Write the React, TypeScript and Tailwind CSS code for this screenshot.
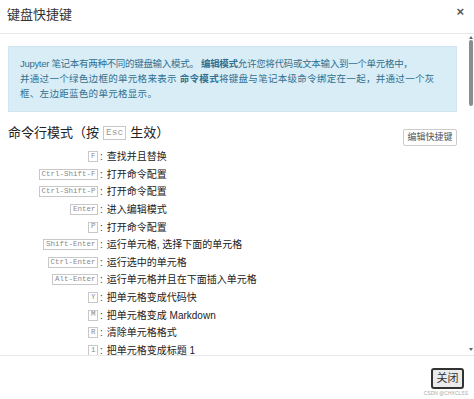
import React from "react";

const rows: [string, string][] = [
  ["F", "查找并且替换"],
  ["Ctrl-Shift-F", "打开命令配置"],
  ["Ctrl-Shift-P", "打开命令配置"],
  ["Enter", "进入编辑模式"],
  ["P", "打开命令配置"],
  ["Shift-Enter", "运行单元格, 选择下面的单元格"],
  ["Ctrl-Enter", "运行选中的单元格"],
  ["Alt-Enter", "运行单元格并且在下面插入单元格"],
  ["Y", "把单元格变成代码快"],
  ["M", "把单元格变成 Markdown"],
  ["R", "清除单元格格式"],
  ["1", "把单元格变成标题 1"],
];

const sans = "font-['Liberation_Sans','Noto_Sans_CJK_SC',sans-serif]";

function Kbd({ children }: { children: React.ReactNode }) {
  return (
    <span className="inline-flex items-center h-[11px] px-[1.5px] border border-[#c8c8c8] bg-white text-[#8a8a8a] font-['Liberation_Mono',monospace] text-[7.5px] leading-none">
      {children}
    </span>
  );
}

export default function App() {
  return (
    <div className={`w-[474px] h-[399px] bg-white relative flex flex-col overflow-hidden text-[#333] ${sans}`}>
      {/* header */}
      <div className="h-[34px] shrink-0 border-b border-[#e8e8e8] flex items-center justify-between pl-[7px] pr-[10px]">
        <div className="text-[13px] leading-none text-[#333] -mt-[5px]">键盘快捷键</div>
        <div className="text-[13px] font-bold text-[#555] leading-none -mt-[11px]">×</div>
      </div>

      {/* body */}
      <div className="flex-1 relative overflow-hidden">
        <div className="pl-[8px] pr-[17px] pt-[12px]">
          <div className="bg-[#d9edf7] border border-[#cfe6f2] text-[#31708f] text-[9.5px] leading-[15px] whitespace-nowrap px-[11px] pt-[9px] pb-[10px]">
            <span className="tracking-[-0.3px]">
              Jupyter 笔记本有两种不同的键盘输入模式。 <b>编辑模式</b>允许您将代码或文本输入到一个单元格中，
            </span>
            <br />
            <span className="tracking-[0.3px]">
              并通过一个绿色边框的单元格来表示 <b>命令模式</b>将键盘与笔记本级命令绑定在一起，并通过一个灰
            </span>
            <br />
            <span className="tracking-[0.3px]">框、左边距蓝色的单元格显示。</span>
          </div>

          <div className="flex justify-between items-start mt-[11px]">
            <div className="flex items-center text-[13px] leading-[20px] text-[#222]">
              <span>命令行模式（按</span>
              <span className="inline-flex items-center h-[14px] px-[2px] mx-[4px] border border-[#c8c8c8] text-[#999] font-['Liberation_Mono',monospace] text-[9.5px] leading-none">
                Esc
              </span>
              <span>生效）</span>
            </div>
            <button className="mt-[6px] h-[17px] w-[54px] border border-[#ccc] bg-white text-[9px] text-[#555] leading-none rounded-[2px] flex items-center justify-center">
              编辑快捷键
            </button>
          </div>

          <div className="mt-[2px]">
            {rows.map(([k, t]) => (
              <div key={k} className="flex items-center h-[17.6px] text-[10px]">
                <div className="w-[90px] flex justify-end">
                  <Kbd>{k}</Kbd>
                </div>
                <span className="ml-[2px] mr-[4px] text-[#333]">:</span>
                <span className="text-[#222]">{t}</span>
              </div>
            ))}
          </div>
        </div>

        {/* scrollbar */}
        <div className="absolute right-0 top-0 bottom-0 w-[8px] bg-white">
          <div className="absolute left-[3px] top-[2px] w-0 h-0 border-l-[2px] border-r-[2px] border-b-[3px] border-l-transparent border-r-transparent border-b-[#666]" />
          <div className="absolute left-[3px] top-[6px] w-[4px] h-[66px] rounded-[2px] bg-[#8c8c8c]" />
          <div className="absolute left-[3px] bottom-[4px] w-0 h-0 border-l-[2px] border-r-[2px] border-t-[3px] border-l-transparent border-r-transparent border-t-[#666]" />
        </div>
      </div>

      {/* footer */}
      <div className="h-[44px] shrink-0 border-t border-[#e8e8e8] flex justify-end items-start pt-[12px] pr-[10px]">
        <button className="w-[33px] h-[21px] border-2 border-[#333] rounded-[3px] bg-[#ebebeb] text-[11px] text-[#333] leading-none flex items-center justify-center">
          关闭
        </button>
      </div>
      <div className="absolute right-[6px] bottom-[3px] text-[5px] leading-none text-[#aaa] font-['Liberation_Sans',sans-serif]">
        CSDN @CHXCLSS
      </div>
    </div>
  );
}
